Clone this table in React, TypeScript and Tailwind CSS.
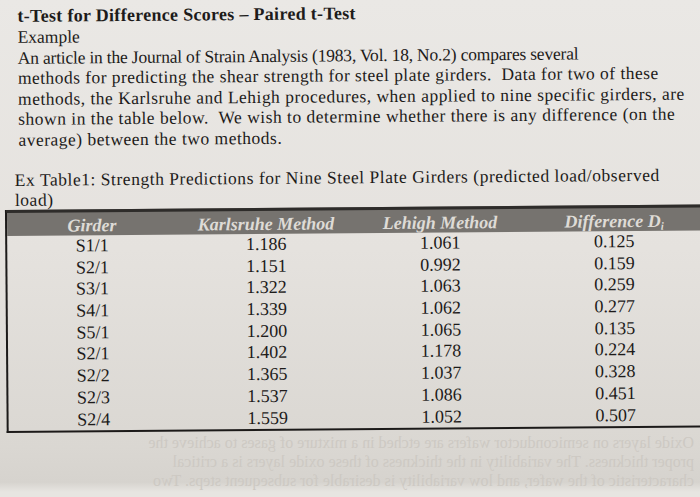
const rows = [
  ["S1/1", "1.186", "1.061", "0.125"],
  ["S2/1", "1.151", "0.992", "0.159"],
  ["S3/1", "1.322", "1.063", "0.259"],
  ["S4/1", "1.339", "1.062", "0.277"],
  ["S5/1", "1.200", "1.065", "0.135"],
  ["S2/1", "1.402", "1.178", "0.224"],
  ["S2/2", "1.365", "1.037", "0.328"],
  ["S2/3", "1.537", "1.086", "0.451"],
  ["S2/4", "1.559", "1.052", "0.507"],
];

export default function App() {
  return (
    <div className="relative w-[700px] h-[497px] overflow-hidden bg-[linear-gradient(180deg,#eae8e5_0%,#e5e2de_50%,#dad7d2_90%,#d6d3ce_97%,#e7e5e1_99%)] font-['Liberation_Serif',serif] text-[#1d1b1a]">
      {/* show-through from the back of the page */}
      <div className="absolute left-[6px] top-[433px] w-[688px] -scale-x-100 text-[16px] leading-[19px] text-[#cdc9c3] whitespace-nowrap">
        <div>Oxide layers on semiconductor wafers are etched in a mixture of gases to achieve the</div>
        <div>proper thickness. The variability in the thickness of these oxide layers is a critical</div>
        <div>characteristic of the wafer, and low variability is desirable for subsequent steps. Two</div>
      </div>

      <div className="relative -rotate-[0.45deg] origin-left">
        <div className="pl-[19px] pt-[6px]">
          <h1 className="text-[18px] font-bold leading-[21px] tracking-[0.3px]">t-Test for Difference Scores – Paired t-Test</h1>
          <div className="text-[17.5px] leading-[20.5px]">
            <div>Example</div>
            <div className="tracking-[-0.2px]">An article in the Journal of Strain Analysis (1983, Vol. 18, No.2) compares several</div>
            <div className="tracking-[0.45px]">methods for predicting the shear strength for steel plate girders.&nbsp; Data for two of these</div>
            <div className="tracking-[0.48px]">methods, the Karlsruhe and Lehigh procedures, when applied to nine specific girders, are</div>
            <div className="tracking-[0.5px]">shown in the table below.&nbsp; We wish to determine whether there is any difference (on the</div>
            <div className="tracking-[0.5px]">average) between the two methods.</div>
          </div>
        </div>

        <div className="pl-[15px] mt-[20px] text-[17.5px] leading-[20px] tracking-[0.54px]">
          <div>Ex Table1: Strength Predictions for Nine Steel Plate Girders (predicted load/observed</div>
          <div>load)</div>
        </div>

        <div className="ml-[5px] w-[720px] border-l-2 border-b-2 border-[#1c1a19]">
          <div className="grid grid-cols-[170px_178px_170px_178px] h-[26px] items-center border-t-[3px] border-[#2e2c2a] bg-[#76736f] text-[18px] font-bold italic text-[#dedbd6]">
            <div className="text-center">Girder</div>
            <div className="text-center">Karlsruhe Method</div>
            <div className="text-center">Lehigh Method</div>
            <div className="text-center">
              Difference D<sub className="text-[11px]">i</sub>
            </div>
          </div>
          {rows.map((r, i) => (
            <div key={i} className="grid grid-cols-[170px_178px_170px_178px] h-[21.7px] items-center text-[18px]">
              {r.map((c, j) => (
                <div key={j} className="text-center leading-[21.7px]">
                  {c}
                </div>
              ))}
            </div>
          ))}
        </div>
      </div>
    </div>
  );
}
